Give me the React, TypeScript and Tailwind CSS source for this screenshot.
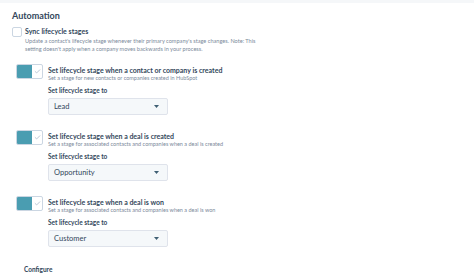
import { Check } from 'lucide-react';

const font = { fontFamily: 'Lato, "Open Sans", sans-serif' };

const RULES = [
  {
    title: 'Set lifecycle stage when a contact or company is created',
    help: 'Set a stage for new contacts or companies created in HubSpot',
    value: 'Lead',
  },
  {
    title: 'Set lifecycle stage when a deal is created',
    help: 'Set a stage for associated contacts and companies when a deal is created',
    value: 'Opportunity',
  },
  {
    title: 'Set lifecycle stage when a deal is won',
    help: 'Set a stage for associated contacts and companies when a deal is won',
    value: 'Customer',
  },
];

function Toggle() {
  return (
    <div className="flex h-[15px] w-[27px] shrink-0 overflow-hidden rounded-[2px] border border-[#cbd6e2] bg-white">
      <div className="w-[15px] bg-[#4a9db1]" />
      <div className="flex flex-1 items-center justify-center">
        <Check className="h-[7px] w-[7px] text-[#8da2b8]" strokeWidth={2} />
      </div>
    </div>
  );
}

function Rule({ title, help, value }: { title: string; help: string; value: string }) {
  return (
    <div className="flex gap-[5px]">
      <Toggle />
      <div className="flex flex-col">
        <div className="mt-[1px] text-[7px] font-bold leading-[10px] text-[#33475b]">{title}</div>
        <div className="text-[5.5px] leading-[7px] text-[#7c8a9b]">{help}</div>
        <div className="mt-[5px] text-[6.5px] font-bold leading-[8px] text-[#33475b]">Set lifecycle stage to</div>
        <div className="mt-[3px] flex h-[17px] w-[120px] items-center justify-between rounded-[2px] border border-[#dfe3eb] bg-[#f5f8fa] pl-[5px] pr-[8px]">
          <span className="text-[7.5px] text-[#33475b]">{value}</span>
          <svg width="5" height="3" viewBox="0 0 5 3">
            <path d="M0 0 L5 0 L2.5 3 Z" fill="#3f5f73" />
          </svg>
        </div>
      </div>
    </div>
  );
}

export default function App() {
  return (
    <div className="h-[279px] w-[474px] overflow-hidden bg-white" style={font}>
      <div className="h-[3px] bg-[#f5f7f9]" />
      <div className="pl-[12px] pt-[7px]">
        <h2 className="text-[9px] font-bold leading-[12px] text-[#33475b]">Automation</h2>

        <div className="mt-[4px] flex gap-[3px]">
          <div className="mt-[1px] h-[10px] w-[10px] shrink-0 rounded-[2px] border border-[#cbd6e2] bg-white" />
          <div className="flex flex-col">
            <div className="text-[7px] font-bold leading-[11px] text-[#33475b]">Sync lifecycle stages</div>
            <div className="text-[5.6px] leading-[8px] text-[#7c8a9b]">
              Update a contact's lifecycle stage whenever their primary company's stage changes. Note: This
              <br />
              setting doesn't apply when a company moves backwards in your process.
            </div>
          </div>
        </div>

        <div className="ml-[4px] mt-[11px] flex flex-col gap-[15px]">
          {RULES.map((r) => (
            <Rule key={r.value} {...r} />
          ))}
        </div>

        <div className="ml-[12px] mt-[18px] text-[6.5px] font-bold leading-[9px] text-[#33475b]">Configure</div>
      </div>
    </div>
  );
}
